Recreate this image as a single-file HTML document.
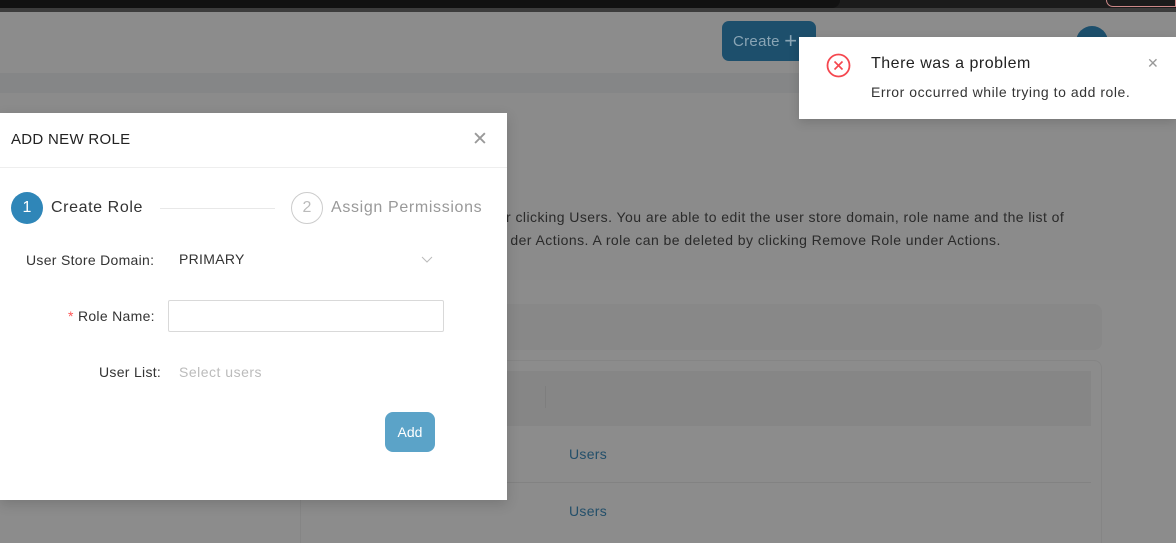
<!DOCTYPE html>
<html><head><style>
*{box-sizing:border-box;margin:0;padding:0}
html,body{width:1176px;height:543px;overflow:hidden}
body{background:#8c8c8c;font-family:"Liberation Sans",sans-serif;position:relative}
.abs{position:absolute}
</style></head><body>
<div class="abs" style="left:0;top:0;width:1176px;height:8px;background:#1b1b1b"></div>
<div class="abs" style="left:0;top:0;width:840px;height:8px;background:#111;border-radius:0 0 10px 0"></div>
<div class="abs" style="left:0;top:8px;width:1176px;height:4px;background:#3c3c3c"></div>
<div class="abs" style="left:1106px;top:0;width:70px;height:7px;border:1px solid #c88;border-top:none;border-radius:0 0 0 8px"></div>
<div class="abs" style="left:0;top:73px;width:1176px;height:20px;background:#858687"></div>
<div class="abs" style="left:0;top:93px;width:1176px;height:187px;background:#8b8b8b"></div>
<div class="abs" style="left:722px;top:21px;width:94px;height:40px;background:#1d4f6c;border-radius:7px;color:#8aa5b5;font-size:15px;line-height:40px;padding-left:11px;letter-spacing:.3px">Create <span style="font-size:22px;vertical-align:-2px">+</span></div>
<div class="abs" style="left:1076px;top:26px;width:32px;height:32px;border-radius:50%;background:#1d4f6c"></div>
<div class="abs" style="left:506px;top:206px;color:#2a2a2a;font-size:14px;line-height:23px;white-space:nowrap;letter-spacing:.45px">r clicking Users. You are able to edit the user store domain, role name and the list of<br>&nbsp;der Actions. A role can be deleted by clicking Remove Role under Actions.</div>
<div class="abs" style="left:300px;top:304px;width:802px;height:46px;background:#888;border-radius:8px"></div>
<div class="abs" style="left:300px;top:360px;width:802px;height:190px;border:1px solid #858585;border-radius:8px"></div>
<div class="abs" style="left:300px;top:371px;width:791px;height:55px;background:#868686"></div>
<div class="abs" style="left:545px;top:386px;width:1px;height:22px;background:#7e7e7e"></div>
<div class="abs" style="left:300px;top:482px;width:791px;height:1px;background:#828282"></div>
<div class="abs" style="left:569px;top:446px;color:#234f6a;font-size:14px;letter-spacing:.3px">Users</div>
<div class="abs" style="left:569px;top:503px;color:#234f6a;font-size:14px;letter-spacing:.3px">Users</div>

<div class="abs" style="left:0;top:113px;width:507px;height:387px;background:#fff;box-shadow:0 4px 12px rgba(0,0,0,.15)">
 <div class="abs" style="left:11px;top:18px;font-size:15px;color:#222;letter-spacing:.3px">ADD NEW ROLE</div>
 <div class="abs" style="left:472px;top:15px;font-size:19px;color:#999;font-weight:300">✕</div>
 <div class="abs" style="left:0;top:54px;width:507px;height:1px;background:#eee"></div>
 <div class="abs" style="left:11px;top:79px;width:32px;height:32px;border-radius:50%;background:#2f86b8;color:#fff;text-align:center;line-height:32px;font-size:16px">1</div>
 <div class="abs" style="left:51px;top:86px;font-size:16px;color:#333;letter-spacing:.6px">Create Role</div>
 <div class="abs" style="left:160px;top:95px;width:115px;height:1px;background:#e8e8e8"></div>
 <div class="abs" style="left:291px;top:79px;width:32px;height:32px;border-radius:50%;border:1px solid #ccc;color:#bbb;text-align:center;line-height:30px;font-size:16px">2</div>
 <div class="abs" style="left:331px;top:86px;font-size:16px;color:#999;letter-spacing:.65px">Assign Permissions</div>
 <div class="abs" style="left:26px;top:139px;font-size:14px;color:#333;letter-spacing:.3px">User Store Domain:</div>
 <div class="abs" style="left:179px;top:138px;font-size:14px;color:#333;letter-spacing:.3px">PRIMARY</div>
 <svg class="abs" style="left:421px;top:143px" width="12" height="8"><path d="M1 1l5 5 5-5" stroke="#bbb" fill="none"/></svg>
 <div class="abs" style="left:68px;top:195px;font-size:14px;color:#333;letter-spacing:.3px"><span style="color:#f55">*</span> Role Name:</div>
 <div class="abs" style="left:168px;top:187px;width:276px;height:32px;border:1px solid #d9d9d9;border-radius:2px"></div>
 <div class="abs" style="left:99px;top:251px;font-size:14px;color:#333;letter-spacing:.3px">User List:</div>
 <div class="abs" style="left:179px;top:251px;font-size:14px;color:#bbb;letter-spacing:.5px">Select users</div>
 <div class="abs" style="left:385px;top:299px;width:50px;height:40px;background:#5ba3c8;border-radius:8px;color:#fff;font-size:14px;text-align:center;line-height:40px">Add</div>
</div>

<div class="abs" style="left:799px;top:37px;width:377px;height:82px;background:#fff;box-shadow:0 3px 10px rgba(0,0,0,.15)">
 <svg class="abs" style="left:27px;top:16px" width="25" height="25"><circle cx="12.5" cy="12.5" r="11" stroke="#f5474f" stroke-width="1.8" fill="none"/><path d="M8.5 8.5l8 8M16.5 8.5l-8 8" stroke="#f5474f" stroke-width="1.6"/></svg>
 <div class="abs" style="left:72px;top:18px;font-size:16px;color:#222;letter-spacing:.5px">There was a problem</div>
 <div class="abs" style="left:72px;top:47px;font-size:14px;color:#333;letter-spacing:.55px">Error occurred while trying to add role.</div>
 <div class="abs" style="left:348px;top:18px;font-size:14px;color:#999">✕</div>
</div>
</body></html>
